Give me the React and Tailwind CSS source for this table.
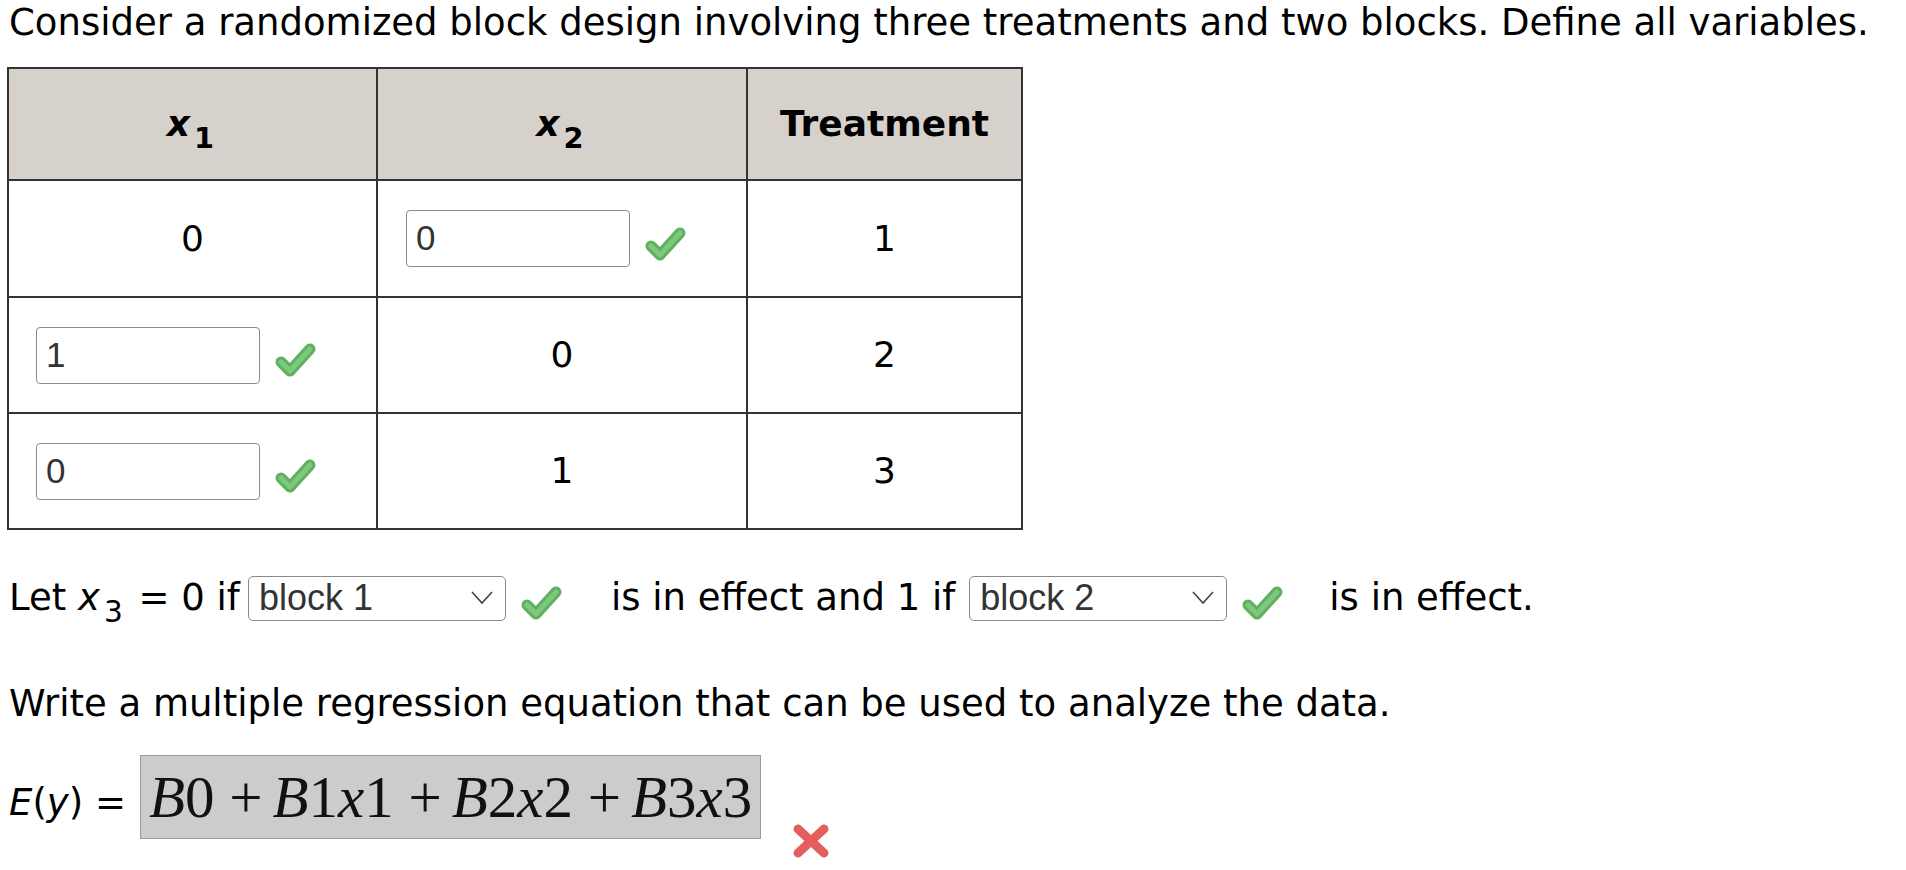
import React from 'react';

const Check = () => (
  <svg width="42" height="36" viewBox="0 0 42 36" aria-hidden="true">
    <path
      d="M7 21 L16 30 L36 8"
      fill="none"
      stroke="#5fb05f"
      strokeWidth="11"
      strokeLinecap="round"
      strokeLinejoin="round"
    />
    <path
      d="M7 21 L16 30 L36 8"
      fill="none"
      stroke="#7dc87d"
      strokeWidth="5"
      strokeLinecap="round"
      strokeLinejoin="round"
    />
  </svg>
);

const Cross = () => (
  <svg width="40" height="36" viewBox="0 0 40 36" aria-hidden="true">
    <path d="M7 6 L33 30 M33 6 L7 30" stroke="#e45e5e" strokeWidth="9" strokeLinecap="round" />
  </svg>
);

const Field = ({ value }) => (
  <div className="flex items-center gap-[14px]">
    <div className="flex h-[57px] w-[224px] items-center rounded-[4px] border border-[#8a8a8a] bg-white pl-[9px] font-['Liberation_Sans',sans-serif] text-[35px] text-[#333]">
      {value}
    </div>
    <span className="mt-[8px] flex">
      <Check />
    </span>
  </div>
);

const Dropdown = ({ label }) => (
  <span className="inline-flex h-[45px] w-[258px] items-center justify-between rounded-[5px] border border-[#8a8a8a] bg-white pl-[10px] pr-[12px] font-['Liberation_Sans',sans-serif] text-[36px] text-[#333]">
    {label}
    <svg width="22" height="14" viewBox="0 0 22 14" aria-hidden="true">
      <path d="M1 1 L11 12 L21 1" fill="none" stroke="#444" strokeWidth="1.6" />
    </svg>
  </span>
);

const Sub = ({ v, n }) => (
  <span className="italic">
    {v}
    <span className="relative top-[12px] ml-[4px] mr-[4px] text-[0.8em] not-italic">{n}</span>
  </span>
);

export default function App() {
  return (
    <div className="min-h-[870px] bg-white px-[7px] font-['DejaVu_Sans',Verdana,sans-serif] text-[37px] text-black">
      <p className="pl-[2px] pt-[1px] leading-[44px]">
        Consider a randomized block design involving three treatments and two blocks. Define all variables.
      </p>

      <table className="mt-[22px] border-collapse border-2 border-[#333] text-[36px]">
        <thead>
          <tr className="h-[112px] bg-[#d6d2cb]">
            <th className="w-[369px] border-2 border-[#333] font-bold">
              <Sub v="x" n="1" />
            </th>
            <th className="w-[370px] border-2 border-[#333] font-bold">
              <Sub v="x" n="2" />
            </th>
            <th className="w-[275px] border-2 border-[#333] font-bold">Treatment</th>
          </tr>
        </thead>
        <tbody className="text-center">
          <tr className="h-[117px]">
            <td className="border-2 border-[#333]">0</td>
            <td className="border-2 border-[#333] pl-[28px]">
              <Field value="0" />
            </td>
            <td className="border-2 border-[#333]">1</td>
          </tr>
          <tr className="h-[116px]">
            <td className="border-2 border-[#333] pl-[27px]">
              <Field value="1" />
            </td>
            <td className="border-2 border-[#333]">0</td>
            <td className="border-2 border-[#333]">2</td>
          </tr>
          <tr className="h-[116px]">
            <td className="border-2 border-[#333] pl-[27px]">
              <Field value="0" />
            </td>
            <td className="border-2 border-[#333]">1</td>
            <td className="border-2 border-[#333]">3</td>
          </tr>
        </tbody>
      </table>

      <div className="mt-[40px] flex items-center pl-[2px]">
        <span>
          Let <Sub v="x" n="3" /> = 0 if
        </span>
        <span className="ml-[8px]">
          <Dropdown label="block 1" />
        </span>
        <span className="ml-[14px] mr-[49px] mt-[8px] flex">
          <Check />
        </span>
        <span>is in effect and 1 if</span>
        <span className="ml-[14px]">
          <Dropdown label="block 2" />
        </span>
        <span className="ml-[14px] mr-[46px] mt-[8px] flex">
          <Check />
        </span>
        <span>is in effect.</span>
      </div>

      <p className="mt-[50px] pl-[2px]">Write a multiple regression equation that can be used to analyze the data.</p>

      <div className="mt-[24px] flex items-start pl-[2px]">
        <span className="mt-[20px]">
          <span className="italic">E</span>(<span className="italic">y</span>) =
        </span>
        <div className="ml-[14px] flex h-[84px] items-center border border-[#999] bg-[#cccccc] px-[8px] font-['Liberation_Serif',serif] text-[59px] text-[#111]">
          <span className="italic">B</span>0 + <span className="ml-[10px] italic">B</span>1<span className="italic">x</span>1 + <span className="ml-[10px] italic">B</span>2<span className="italic">x</span>2 + <span className="ml-[10px] italic">B</span>3<span className="italic">x</span>3
        </div>
        <span className="ml-[30px] mt-[68px] flex">
          <Cross />
        </span>
      </div>
    </div>
  );
}
